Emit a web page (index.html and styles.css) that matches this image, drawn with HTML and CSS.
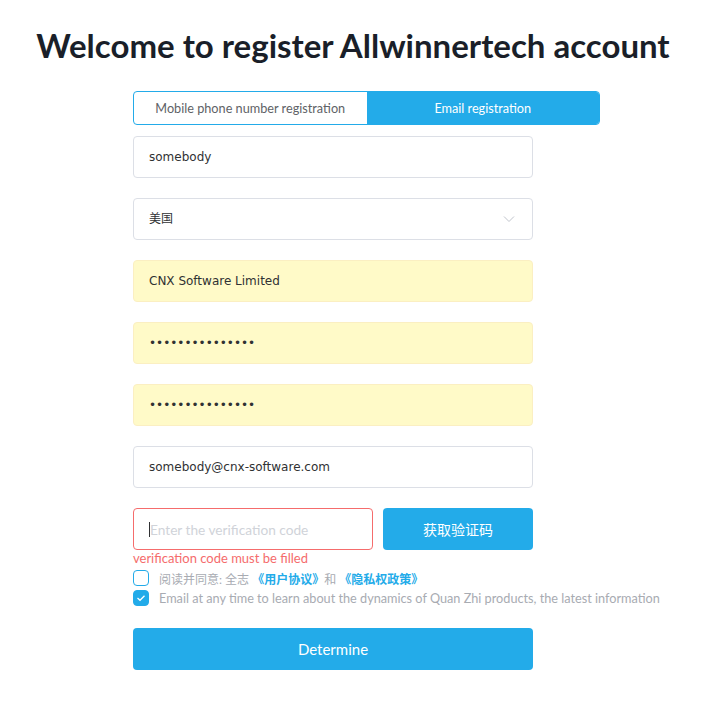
FILE: index.html
```html
<!DOCTYPE html>
<html>
<head>
  <meta charset="UTF-8" />
  <title>Register</title>
  <link rel="stylesheet" href="styles.css">
</head>
<body>
  <div class="page">
    <h1>Welcome to register Allwinnertech account</h1>

    <div class="form">
      <div class="tabs">
        <div class="tab">Mobile phone number registration</div>
        <div class="tab tab-active">Email registration</div>
      </div>

      <div class="field">
        <input class="input" type="text" value="somebody">
      </div>

      <div class="field">
        <div class="input select">
          <span>美国</span>
          <svg class="chevron" width="12" height="8" viewBox="0 0 12 8">
            <path d="M1 1.5 L6 6.5 L11 1.5" fill="none" stroke="#c0c4cc" stroke-width="1"/>
          </svg>
        </div>
      </div>

      <div class="field">
        <input class="input autofill" type="text" value="CNX Software Limited">
      </div>

      <div class="field">
        <input class="input autofill" type="password" value="somepassword123">
      </div>

      <div class="field">
        <input class="input autofill" type="password" value="somepassword123">
      </div>

      <div class="field">
        <input class="input" type="text" value="somebody@cnx-software.com">
      </div>

      <div class="code-row">
        <div class="code-input">
          <span class="caret"></span>
          <span class="placeholder">Enter the verification code</span>
        </div>
        <button class="btn code-btn">获取验证码</button>
      </div>
      <div class="error">verification code must be filled</div>

      <div class="check-row">
        <span class="checkbox"></span>
        <span class="check-text cn">阅读并同意: 全志 <a class="link">《用户协议》</a>和 <a class="link">《隐私权政策》</a></span>
      </div>
      <div class="check-row">
        <span class="checkbox checked">
          <svg width="10" height="8" viewBox="0 0 10 8">
            <path d="M1.5 4 L4 6.3 L8.5 1.7" fill="none" stroke="#fff" stroke-width="1.3"/>
          </svg>
        </span>
        <span class="check-text">Email at any time to learn about the dynamics of Quan Zhi products, the latest information</span>
      </div>

      <button class="btn submit">Determine</button>
    </div>
  </div>
</body>
</html>
```

FILE: styles.css
```css
body {
  margin: 0;
  background-color: #fff;
  font-family: Lato, "Noto Sans CJK SC", sans-serif;
  color: #303133;
}
.page {
  width: 718px;
  padding-top: 26px;
}
h1 {
  margin: 0;
  padding-right: 12px;
  text-align: center;
  font-size: 33px;
  font-weight: bold;
  line-height: 38px;
  color: #1a1f29;
}
.form {
  width: 400px;
  margin: 27px 0 0 133px;
}
.tabs {
  display: flex;
  width: 467px;
  height: 34px;
  box-sizing: border-box;
  border: 1px solid #23abe9;
  border-radius: 4px;
  overflow: hidden;
}
.tab {
  flex: 1;
  display: flex;
  align-items: center;
  justify-content: center;
  font-size: 12.7px;
  color: #606266;
}
.tab-active {
  background-color: #23abe9;
  color: #fff;
}
.field {
  margin-top: 11px;
  margin-bottom: -9px;
}
.field + .field {
  margin-top: 29px;
}
.input {
  display: block;
  width: 400px;
  height: 42px;
  box-sizing: border-box;
  border: 1px solid #dcdfe6;
  border-radius: 4px;
  padding: 0 15px;
  font-family: "DejaVu Sans", "Noto Sans CJK SC", sans-serif;
  font-size: 12px;
  color: #303133;
  background-color: #fff;
  outline: none;
}
.select {
  display: flex;
  align-items: center;
  justify-content: space-between;
  padding-bottom: 3px;
}
.chevron {
  margin: 3px 2px 0 0;
}
.autofill {
  background-color: #fffac8;
  border-color: #fbefc2;
}
.code-row {
  display: flex;
  gap: 10px;
  margin-top: 29px;
}
.code-input {
  display: flex;
  align-items: center;
  width: 240px;
  height: 42px;
  box-sizing: border-box;
  border: 1px solid #f56c6c;
  border-radius: 4px;
  padding: 0 15px;
}
.caret {
  width: 1px;
  height: 15px;
  background-color: #303133;
}
.placeholder {
  font-size: 13.7px;
  color: #d0d3d9;
}
.btn {
  border: none;
  border-radius: 4px;
  background-color: #23abe9;
  color: #fff;
  font-family: Lato, "Noto Sans CJK SC", sans-serif;
  cursor: pointer;
}
.code-btn {
  width: 150px;
  height: 42px;
  font-size: 14px;
}
.error {
  font-size: 13px;
  line-height: 16px;
  color: #f56c6c;
  margin-top: 0;
}
.check-row {
  display: flex;
  align-items: center;
  gap: 10px;
  height: 20px;
  white-space: nowrap;
}
.error + .check-row {
  margin-top: 2px;
}
.checkbox {
  width: 14px;
  height: 14px;
  border: 1px solid #23abe9;
  border-radius: 4px;
  display: flex;
  align-items: center;
  justify-content: center;
  flex-shrink: 0;
}
.checked {
  background-color: #23abe9;
}
.check-text {
  font-size: 12.7px;
  color: #a8abb2;
}
.cn {
  font-size: 12px;
}
.link {
  color: #23abe9;
  font-weight: bold;
}
.submit {
  display: block;
  width: 400px;
  height: 42px;
  margin-top: 20px;
  font-size: 15px;
}
```
